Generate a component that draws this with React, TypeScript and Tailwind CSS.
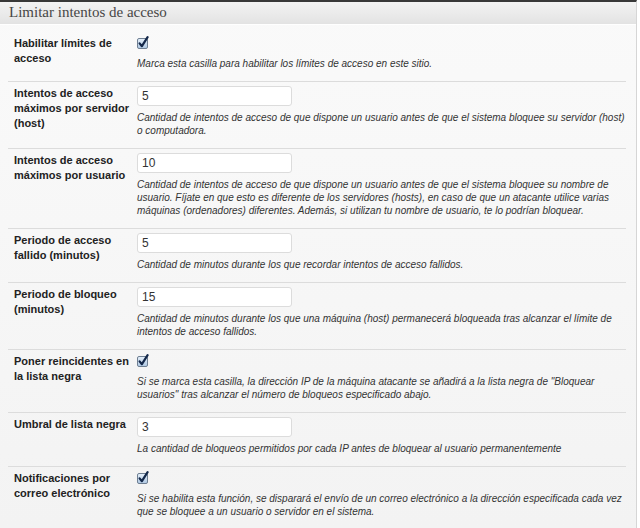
import React from 'react';

type Row = {
  label: string;
  kind: 'check' | 'input';
  value?: string;
  desc: string;
};

const ROWS: Row[] = [
  {
    label: 'Habilitar límites de acceso',
    kind: 'check',
    desc: 'Marca esta casilla para habilitar los límites de acceso en este sitio.',
  },
  {
    label: 'Intentos de acceso máximos por servidor (host)',
    kind: 'input',
    value: '5',
    desc: 'Cantidad de intentos de acceso de que dispone un usuario antes de que el sistema bloquee su servidor (host) o computadora.',
  },
  {
    label: 'Intentos de acceso máximos por usuario',
    kind: 'input',
    value: '10',
    desc: 'Cantidad de intentos de acceso de que dispone un usuario antes de que el sistema bloquee su nombre de usuario. Fíjate en que esto es diferente de los servidores (hosts), en caso de que un atacante utilice varias máquinas (ordenadores) diferentes. Además, si utilizan tu nombre de usuario, te lo podrían bloquear.',
  },
  {
    label: 'Periodo de acceso fallido (minutos)',
    kind: 'input',
    value: '5',
    desc: 'Cantidad de minutos durante los que recordar intentos de acceso fallidos.',
  },
  {
    label: 'Periodo de bloqueo (minutos)',
    kind: 'input',
    value: '15',
    desc: 'Cantidad de minutos durante los que una máquina (host) permanecerá bloqueada tras alcanzar el límite de intentos de acceso fallidos.',
  },
  {
    label: 'Poner reincidentes en la lista negra',
    kind: 'check',
    desc: 'Si se marca esta casilla, la dirección IP de la máquina atacante se añadirá a la lista negra de "Bloquear usuarios" tras alcanzar el número de bloqueos especificado abajo.',
  },
  {
    label: 'Umbral de lista negra',
    kind: 'input',
    value: '3',
    desc: 'La cantidad de bloqueos permitidos por cada IP antes de bloquear al usuario permanentemente',
  },
  {
    label: 'Notificaciones por correo electrónico',
    kind: 'check',
    desc: 'Si se habilita esta función, se disparará el envío de un correo electrónico a la dirección especificada cada vez que se bloquee a un usuario o servidor en el sistema.',
  },
];

const CheckBox: React.FC = () => (
  <svg width="13" height="13" viewBox="0 0 13 13" className="block">
    <defs>
      <linearGradient id="cbg" x1="0" y1="0" x2="0" y2="1">
        <stop offset="0" stopColor="#e6f0fa" />
        <stop offset="1" stopColor="#afc8e3" />
      </linearGradient>
    </defs>
    <rect x="0.5" y="2.5" width="10" height="10" rx="1.5" fill="url(#cbg)" stroke="#6f7f92" />
    <path d="M2.6 7.4 L4.9 10.2 L10.6 1.2" fill="none" stroke="#14284a" strokeWidth="2.2" strokeLinecap="round" strokeLinejoin="round" />
  </svg>
);

const App: React.FC = () => {
  return (
    <div className="w-[640px] h-[528px] overflow-hidden bg-white" style={{ fontFamily: '"Liberation Sans", Arial, sans-serif' }}>
      <div className="w-[637px] h-full border-t-2 border-t-[#383838] border-r border-r-[#d6d6d6] bg-gradient-to-b from-[#fafafa] to-[#f3f3f3]">
        <div
          className="h-[23px] pl-[9px] border-b border-white bg-gradient-to-b from-[#f3f3f3] to-[#e3e3e3] text-[15px] leading-[20px] text-[#464646]"
          style={{ fontFamily: '"Liberation Serif", "Times New Roman", serif' }}
        >
          Limitar intentos de acceso
        </div>
        <div className="pl-2 pr-[10px] pt-[7px]">
          {ROWS.map((row) => (
            <div key={row.label} className="flex border-b border-[#dcdcdc] pt-[4px] pb-[11px]">
              <div className="w-[129px] shrink-0 pl-[6px] pr-[5px] text-[11px] leading-[15px] font-bold text-[#222]">
                {row.label}
              </div>
              <div className="flex-1">
                {row.kind === 'check' ? (
                  <div className="h-[16px]">
                    <CheckBox />
                  </div>
                ) : (
                  <div className="w-[155px] h-[20px] bg-white border border-[#dcdcdc] rounded-[3px] pl-[4px] text-[12px] leading-[18px] text-[#333]">
                    {row.value}
                  </div>
                )}
                <p className="mt-[5px] text-[10px] leading-[13px] italic text-[#333]">{row.desc}</p>
              </div>
            </div>
          ))}
        </div>
      </div>
    </div>
  );
};

export default App;
